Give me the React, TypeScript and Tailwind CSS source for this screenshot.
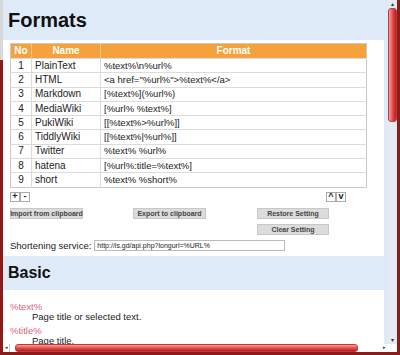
import React from 'react';

const rows = [
  { no: 1, name: 'PlainText', format: '%text%\\n%url%' },
  { no: 2, name: 'HTML', format: '<a href="%url%">%text%</a>' },
  { no: 3, name: 'Markdown', format: '[%text%](%url%)' },
  { no: 4, name: 'MediaWiki', format: '[%url% %text%]' },
  { no: 5, name: 'PukiWiki', format: '[[%text%>%url%]]' },
  { no: 6, name: 'TiddlyWiki', format: '[[%text%|%url%]]' },
  { no: 7, name: 'Twitter', format: '%text% %url%' },
  { no: 8, name: 'hatena', format: '[%url%:title=%text%]' },
  { no: 9, name: 'short', format: '%text% %short%' },
];

const GreyButton = ({ label, className }: { label: string; className: string }) => (
  <button
    className={`flex h-[11px] items-center justify-center whitespace-nowrap border border-[#c8c8c8] bg-[#dcdcdc] text-[7px] leading-none font-semibold text-[#444] ${className}`}
  >
    {label}
  </button>
);

const SmallBox = ({ label }: { label: string }) => (
  <div className="flex h-[10px] w-[10px] items-center justify-center border border-[#aaa] bg-white text-[9px] font-bold leading-none text-[#222]">
    {label}
  </div>
);

const App = () => {
  return (
    <div
      className="flex h-[355px] w-[400px] flex-col overflow-hidden bg-[#8b1c1c]"
      style={{ fontFamily: '"Liberation Sans", Arial, sans-serif' }}
    >
      <div className="flex h-[352px]">
        {/* left window edge */}
        <div className="flex w-[3px] flex-col">
          <div className="h-[60px] bg-[#d8d8d8]" />
          <div className="flex-1 bg-[#8b1c1c]" />
        </div>

        <div className="flex w-[385px] flex-col">
          <div className="h-[344px] overflow-hidden bg-[#dfeaf9]">
            {/* Formats header */}
            <div className="flex h-[40px] items-center pl-[5px]">
              <h1 className="text-[20px] font-bold text-[#111]">Formats</h1>
            </div>

            <div className="mr-[4px] h-[216px] bg-white pl-[7px] pt-[3px]">
              <table className="w-[357px] border-collapse border border-[#c9c9c9] text-[10px] leading-[12px] text-[#222]">
                <thead>
                  <tr className="h-[15px] bg-[#f5a23c] text-white">
                    <th className="w-[21px] border-r border-[#f0c890] p-0 font-bold">No</th>
                    <th className="w-[69px] border-r border-[#f0c890] p-0 font-bold">Name</th>
                    <th className="p-0 font-bold">Format</th>
                  </tr>
                </thead>
                <tbody>
                  {rows.map(r => (
                    <tr key={r.no} className="h-[14.3px] border-t border-[#dcdcdc]">
                      <td className="border-r border-[#dcdcdc] p-0 text-center">{r.no}</td>
                      <td className="border-r border-[#dcdcdc] p-0 pl-[3px]">{r.name}</td>
                      <td className="p-0 pl-[3px] text-[9.5px]">{r.format}</td>
                    </tr>
                  ))}
                </tbody>
              </table>

              <div className="mt-[4px] flex w-[336px] items-center justify-between">
                <div className="flex">
                  <SmallBox label="+" />
                  <SmallBox label="-" />
                </div>
                <div className="flex">
                  <SmallBox label="^" />
                  <SmallBox label="v" />
                </div>
              </div>

              <div className="mt-[6px] flex items-start">
                <GreyButton label="Import from clipboard" className="w-[73px]" />
                <GreyButton label="Export to clipboard" className="ml-[50px] w-[73px]" />
                <div className="ml-[51px] flex flex-col gap-[5px]">
                  <GreyButton label="Restore Setting" className="w-[72px]" />
                  <GreyButton label="Clear Setting" className="w-[72px]" />
                </div>
              </div>

              <div className="mt-[5px] flex items-center">
                <span className="text-[9.5px] leading-[11px] text-[#222]">Shortening service:</span>
                <div className="ml-[3px] flex h-[11px] w-[191px] items-center border border-[#bbb] pl-[2px] text-[7px] leading-none text-[#222]">
                  http://is.gd/api.php?longurl=%URL%
                </div>
              </div>
            </div>

            {/* Basic header */}
            <div className="flex h-[34px] items-center pl-[5px]">
              <h2 className="text-[16px] font-bold text-[#111]">Basic</h2>
            </div>

            <div className="mr-[4px] h-[60px] bg-white pl-[7px] pt-[12px] text-[9.5px] leading-[10px]">
              <div className="text-[#d9657a]">%text%</div>
              <div className="pl-[22px] text-[#222]">Page title or selected text.</div>
              <div className="mt-[4px] text-[#d9657a]">%title%</div>
              <div className="pl-[22px] text-[#222]">Page title.</div>
            </div>
          </div>

          {/* horizontal scrollbar */}
          <div className="flex h-[8px] items-center bg-white">
            <div className="flex h-full w-[7px] items-center justify-center border-r border-[#ccc] text-[5px] text-[#333]">◂</div>
            <div className="ml-[5px] h-full w-[343px] rounded-[3px] border border-[#c23a3a] bg-gradient-to-b from-[#f8a0a0] via-[#e84c4c] to-[#b02020]" />
            <div className="flex-1" />
            <div className="flex h-full w-[8px] items-center justify-center text-[5px] text-[#333]">▸</div>
          </div>
        </div>

        {/* vertical scrollbar */}
        <div className="flex w-[9px] flex-col bg-[#e6ebf2]">
          <div className="flex h-[8px] items-center justify-center text-[6px] text-[#333]">▴</div>
          <div className="h-[114px] rounded-[3px] border border-[#c23a3a] bg-gradient-to-r from-[#f8a0a0] via-[#e84c4c] to-[#b02020]" />
          <div className="flex-1" />
          <div className="flex h-[8px] items-center justify-center text-[6px] text-[#333]">▾</div>
          <div className="h-[8px] bg-white" />
        </div>

        <div className="w-[3px] bg-[#8b1c1c]" />
      </div>
      <div className="h-[3px] bg-[#8b1c1c]" />
    </div>
  );
};

export default App;
